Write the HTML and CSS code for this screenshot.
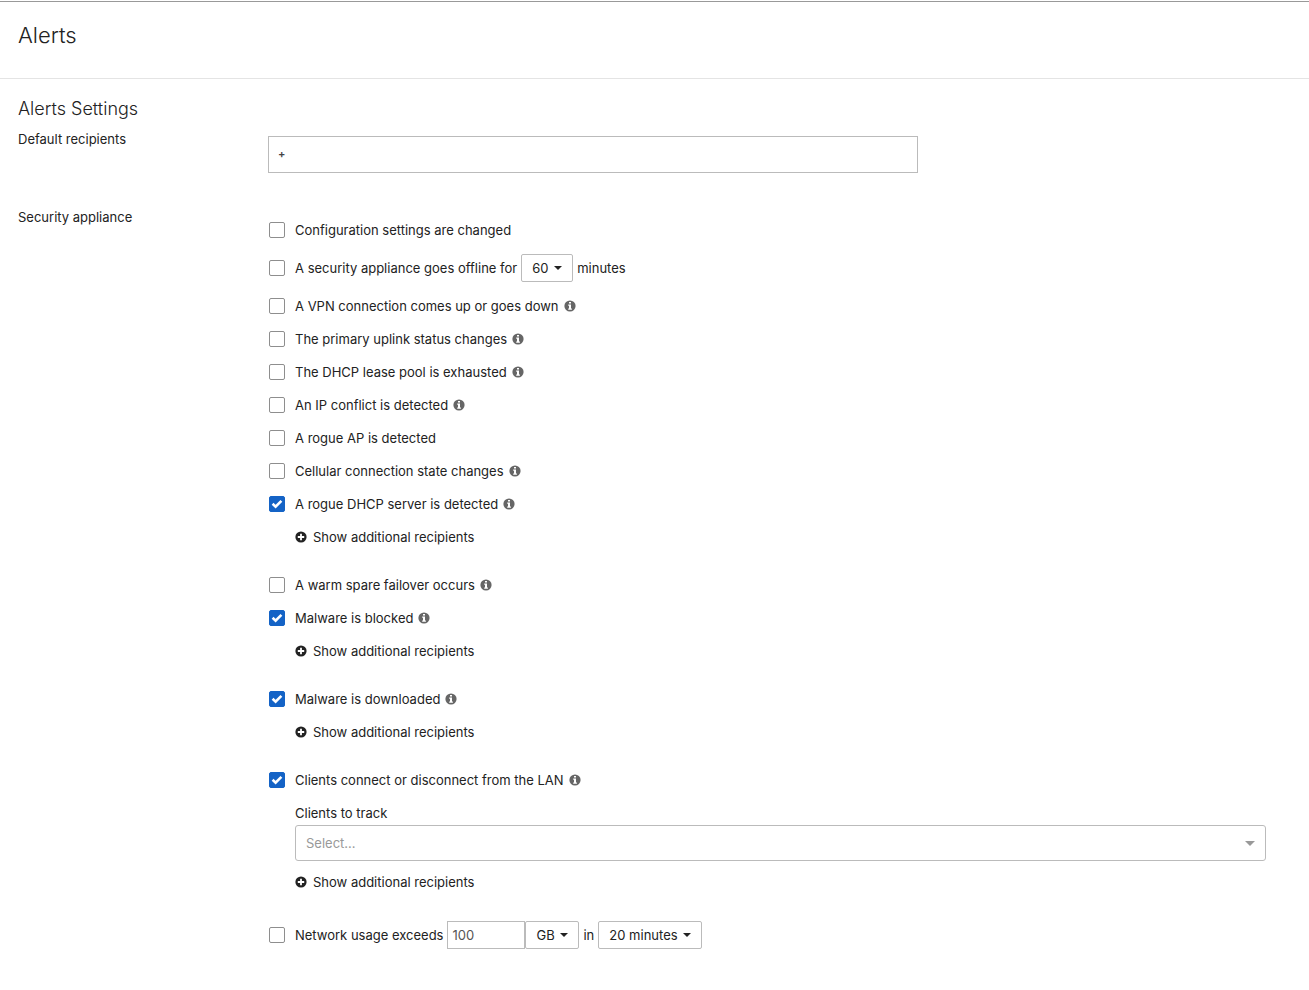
FILE: index.html
```html
<!DOCTYPE html>
<html lang="en">
<head>
  <meta charset="UTF-8" />
  <meta name="viewport" content="width=device-width, initial-scale=1" />
  <title>Alerts</title>
  <link rel="stylesheet" href="styles.css">
</head>
<body>

  <!-- Shared icons -->
  <svg class="sprite" aria-hidden="true">
    <symbol id="info" viewBox="0 0 12 12">
      <circle cx="6" cy="6" r="5.6" fill="#666" />
      <path d="M5 2h2v1.6H5zM4.2 4.6H7v3.9h.9v1.2H4.2V8.5H5V5.8h-.8z" fill="#fff" />
    </symbol>
    <symbol id="plus" viewBox="0 0 12 12">
      <circle cx="6" cy="6" r="5.6" fill="#222" />
      <path d="M5.1 2.8h1.8v2.3h2.3v1.8H6.9v2.3H5.1V6.9H2.8V5.1h2.3z" fill="#fff" />
    </symbol>
  </svg>

  <header class="page-header">
    <h1>Alerts</h1>
  </header>

  <main class="settings">
    <h2>Alerts Settings</h2>

    <section class="setting">
      <label class="setting-name" for="recipients">Default recipients</label>
      <input class="recipients" id="recipients" type="text" placeholder="+">
    </section>

    <section class="setting">
      <h3 class="setting-name">Security appliance</h3>
      <div class="alerts">
        <div class="alert">
          <input type="checkbox" id="config">
          <label for="config">Configuration settings are changed</label>
        </div>
        <div class="alert">
          <input type="checkbox" id="offline">
          <label for="offline">A security appliance goes offline for</label>
          <select class="dropdown" aria-labelledby="offline-unit"><option>60</option></select>
          <span id="offline-unit">minutes</span>
        </div>
        <div class="alert">
          <input type="checkbox" id="vpn">
          <label for="vpn">A VPN connection comes up or goes down</label>
          <svg class="info"><use href="#info" /></svg>
        </div>
        <div class="alert">
          <input type="checkbox" id="uplink">
          <label for="uplink">The primary uplink status changes</label>
          <svg class="info"><use href="#info" /></svg>
        </div>
        <div class="alert">
          <input type="checkbox" id="dhcp-pool">
          <label for="dhcp-pool">The DHCP lease pool is exhausted</label>
          <svg class="info"><use href="#info" /></svg>
        </div>
        <div class="alert">
          <input type="checkbox" id="ip-conflict">
          <label for="ip-conflict">An IP conflict is detected</label>
          <svg class="info"><use href="#info" /></svg>
        </div>
        <div class="alert">
          <input type="checkbox" id="rogue-ap">
          <label for="rogue-ap">A rogue AP is detected</label>
        </div>
        <div class="alert">
          <input type="checkbox" id="cellular">
          <label for="cellular">Cellular connection state changes</label>
          <svg class="info"><use href="#info" /></svg>
        </div>
        <div class="alert">
          <input type="checkbox" id="rogue-dhcp" checked>
          <label for="rogue-dhcp">A rogue DHCP server is detected</label>
          <svg class="info"><use href="#info" /></svg>
        </div>
        <div class="details">
          <button type="button" class="show-more"><svg><use href="#plus" /></svg>Show additional recipients</button>
        </div>
        <div class="alert">
          <input type="checkbox" id="failover">
          <label for="failover">A warm spare failover occurs</label>
          <svg class="info"><use href="#info" /></svg>
        </div>
        <div class="alert">
          <input type="checkbox" id="blocked" checked>
          <label for="blocked">Malware is blocked</label>
          <svg class="info"><use href="#info" /></svg>
        </div>
        <div class="details">
          <button type="button" class="show-more"><svg><use href="#plus" /></svg>Show additional recipients</button>
        </div>
        <div class="alert">
          <input type="checkbox" id="downloaded" checked>
          <label for="downloaded">Malware is downloaded</label>
          <svg class="info"><use href="#info" /></svg>
        </div>
        <div class="details">
          <button type="button" class="show-more"><svg><use href="#plus" /></svg>Show additional recipients</button>
        </div>
        <div class="alert">
          <input type="checkbox" id="clients" checked>
          <label for="clients">Clients connect or disconnect from the LAN</label>
          <svg class="info"><use href="#info" /></svg>
        </div>
        <div class="details">
          <label for="track">Clients to track</label>
          <select class="track" id="track"><option>Select...</option></select>
          <button type="button" class="show-more"><svg><use href="#plus" /></svg>Show additional recipients</button>
        </div>
        <div class="alert">
          <input type="checkbox" id="usage">
          <label for="usage">Network usage exceeds</label>
          <span class="amount">
            <input type="text" value="100" aria-label="Amount">
            <select class="dropdown" aria-label="Unit"><option>GB</option></select>
          </span>
          <label for="period">in</label>
          <select class="dropdown" id="period"><option>20 minutes</option></select>
        </div>
      </div>
    </section>
  </main>

</body>
</html>
```
FILE: styles.css
```css
* {
  box-sizing: border-box;
}
body {
  margin: 0;
  padding-top: 1px;
  background: #fff;
  color: #222;
  font: 13px/18px Inter, "Liberation Sans", sans-serif;
}
input, select, button {
  margin: 0;
  color: inherit;
  font: inherit;
}
.sprite {
  display: none;
}

/* Header */
.page-header {
  padding: 18px;
  padding-bottom: 27px;
  border-top: 1px solid #999;
  border-bottom: 1px solid #e4e4e4;
}
h1 {
  margin: 0;
  font-size: 22px;
  font-weight: 300;
  line-height: 31px;
}
h2 {
  margin: 0 0 9px;
  font-size: 18px;
  font-weight: 300;
  line-height: 25px;
}

/* Setting rows */
.settings {
  padding: 17px 43px 24px 18px;
}
.setting {
  display: grid;
  grid-template-columns: 250px 1fr;
  align-items: start;
  margin-bottom: 35px;
}
.setting-name {
  margin: 0;
  font-size: 13px;
  font-weight: 400;
}
.recipients {
  width: 100%;
  max-width: 650px;
  height: 37px;
  margin-top: 6px;
  padding: 0 9px 4px;
  border: 1px solid #bbb;
}
.recipients::placeholder {
  color: #444;
  font-size: 11px;
  font-weight: 600;
}

/* Alert list */
.alerts {
  display: flex;
  flex-direction: column;
  gap: 15px;
  padding-top: 13px;
}
.alert {
  display: flex;
  align-items: center;
  gap: 4px;
  padding-left: 1px;
}
.alert input[type="checkbox"] {
  appearance: none;
  width: 16px;
  height: 16px;
  margin-right: 6px;
  border: 1px solid #8e8e8e;
  border-radius: 2px;
}
.alert input[type="checkbox"]:checked {
  border-color: #1463c6;
  background: #1463c6 url("data:image/svg+xml,%3Csvg xmlns='http://www.w3.org/2000/svg' viewBox='0 0 14 14'%3E%3Cpath d='M2.6 6.8l3 2.9 5.8-5.9' fill='none' stroke='%23fff' stroke-width='2.6'/%3E%3C/svg%3E") center / 14px no-repeat;
}
.info {
  width: 12px;
  height: 12px;
  margin-left: 1px;
}
.dropdown {
  appearance: none;
  height: 28px;
  padding: 0 23px 0 10px;
  border: 1px solid #bbb;
  border-radius: 2px;
  background: #fff url("data:image/svg+xml,%3Csvg xmlns='http://www.w3.org/2000/svg' viewBox='0 0 8 4'%3E%3Cpath d='M0 0h8L4 4z' fill='%23222'/%3E%3C/svg%3E") right 10px center / 8px 4px no-repeat;
}
.amount {
  display: flex;
}
.amount input {
  width: 78px;
  height: 28px;
  padding: 0 4px;
  border: 1px solid #bbb;
  color: #555;
}

/* Extra options below a ticked alert */
.details {
  display: flex;
  flex-direction: column;
  align-items: flex-start;
  margin-bottom: 15px;
  padding-left: 27px;
}
.show-more {
  display: flex;
  align-items: center;
  gap: 6px;
  padding: 0;
  border: 0;
  background: none;
  cursor: pointer;
}
.show-more svg {
  width: 12px;
  height: 12px;
}
.track {
  appearance: none;
  width: 100%;
  height: 36px;
  margin: 3px 0 12px;
  padding: 0 10px;
  border: 1px solid #bbb;
  border-radius: 3px;
  background: #fff url("data:image/svg+xml,%3Csvg xmlns='http://www.w3.org/2000/svg' viewBox='0 0 10 5'%3E%3Cpath d='M0 0h10L5 5z' fill='%23999'/%3E%3C/svg%3E") right 10px center / 10px 5px no-repeat;
  color: #999;
}
```
